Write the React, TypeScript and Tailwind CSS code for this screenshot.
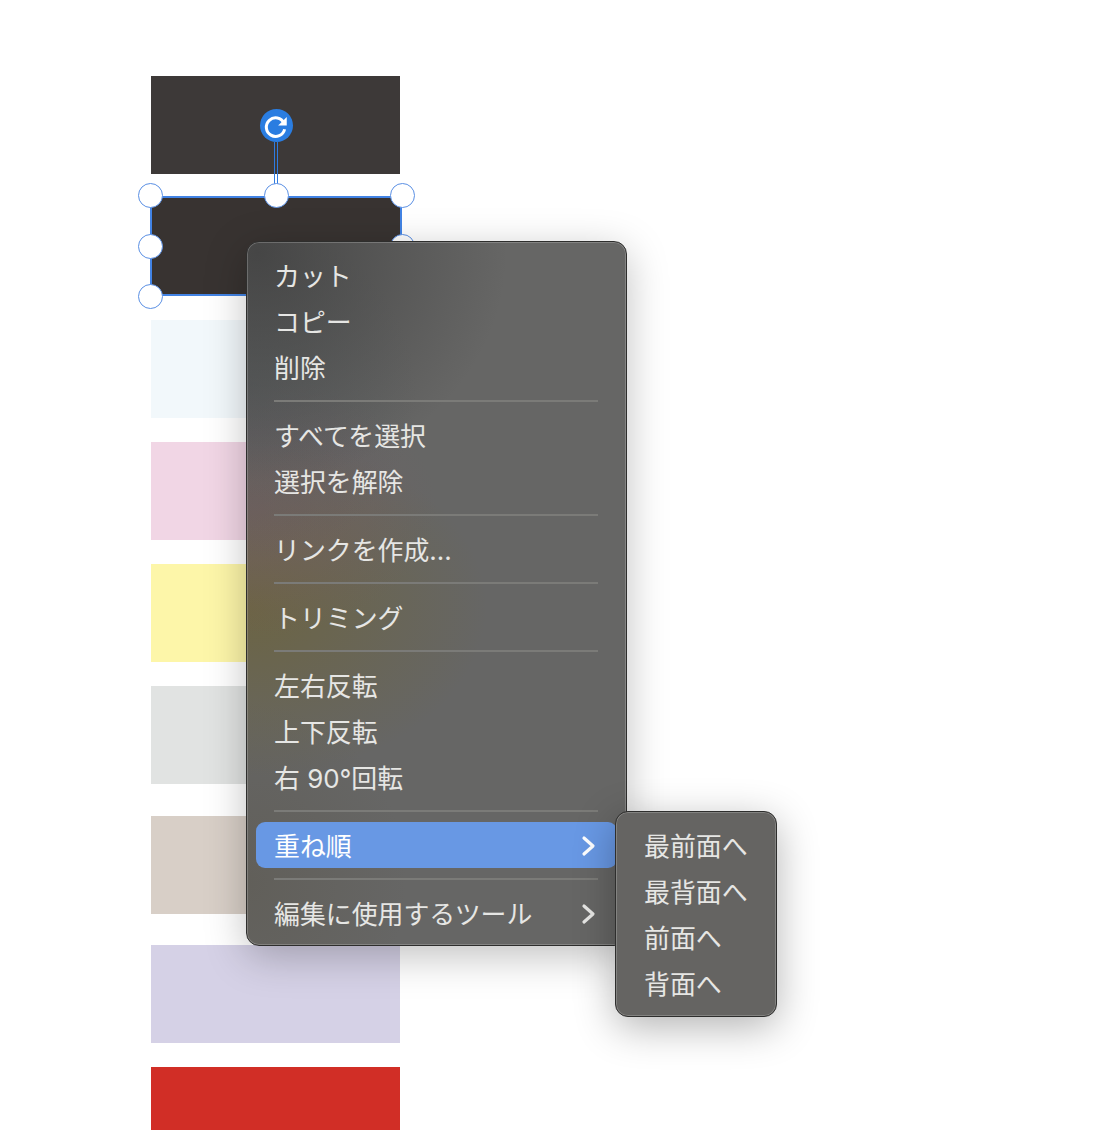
const swatches = [
  { cls: "h-[98px] mb-[22px] bg-[#3d3938]" },
  { cls: "h-[98px] mb-[26px] bg-[#383331]", selected: true },
  { cls: "h-[98px] mb-[24px] bg-[#f2f8fb]" },
  { cls: "h-[98px] mb-[24px] bg-[#f1d6e5]" },
  { cls: "h-[98px] mb-[24px] bg-[#fdf6a9]" },
  { cls: "h-[98px] mb-[32px] bg-[#e1e3e2]" },
  { cls: "h-[98px] mb-[31px] bg-[#d8cfc7]" },
  { cls: "h-[98px] mb-[24px] bg-[#d5d1e6]" },
  { cls: "h-[98px] bg-[#d12e26]" },
];

function Chevron() {
  return (
    <svg width="16" height="22" viewBox="0 0 16 22" fill="none" className="shrink-0 mt-[2px]">
      <path d="M3 3l9 8-9 8" stroke="currentColor" strokeWidth="3.2" strokeLinecap="round" strokeLinejoin="round" />
    </svg>
  );
}

function Handle({ cls }: { cls: string }) {
  return <span className={`absolute w-[25px] h-[25px] rounded-full bg-white border border-[#5b90e4] ${cls}`} />;
}

function SelectionFrame() {
  return (
    <>
      <div className="absolute -left-px -right-[2px] top-0 -bottom-[2px] border-2 border-[#4283e4]" />
      <div className="absolute left-[123px] top-[-54px] w-[4px] h-[42px] border-x border-[#2f7be0]" />
      <div className="absolute left-[108.5px] top-[-87px] w-[33px] h-[33px] rounded-full bg-[#2a7de1] flex items-center justify-center">
        <svg width="28" height="28" viewBox="0 0 26 26" fill="none">
          <path d="M20.4 10.4A8.6 8.6 0 1 0 21 16" stroke="white" strokeWidth="2.8" />
          <path d="M23 4.6v8h-8z" fill="white" />
        </svg>
      </div>
      <Handle cls="left-[-13.5px] top-[-13px]" />
      <Handle cls="left-[112.5px] top-[-13px]" />
      <Handle cls="left-[239px] top-[-13px]" />
      <Handle cls="left-[-13.5px] top-[38px]" />
      <Handle cls="left-[239px] top-[38px]" />
      <Handle cls="left-[-13.5px] top-[88px]" />
    </>
  );
}

function Row({ label, active, more }: { label: string; active?: boolean; more?: boolean }) {
  return (
    <div
      className={`h-[46px] pl-[18px] pr-[20px] flex items-center justify-between rounded-[9px] text-[25.9px] leading-none ${
        active ? "bg-[#6898e4] text-white" : "text-[#e6e6e4]"
      }`}
    >
      <span className="mt-[4px]">{label}</span>
      {more && <Chevron />}
    </div>
  );
}

function Sep() {
  return <div className="ml-[18px] mr-[19px] my-[10px] h-[2px] bg-[#7b7b78]" />;
}

function ContextMenu() {
  return (
    <div className="absolute left-[246px] top-[241px] w-[381px] h-[705px] pt-[10px] px-[9px] rounded-[13px] border border-[#2e2e2d] bg-[radial-gradient(ellipse_250px_230px_at_10px_10px,rgba(62,62,62,0.8),transparent),radial-gradient(ellipse_170px_170px_at_0px_150px,rgba(84,90,92,0.5),transparent),radial-gradient(ellipse_190px_130px_at_0px_265px,rgba(118,92,98,0.55),transparent),radial-gradient(ellipse_240px_170px_at_0px_365px,rgba(110,100,56,0.75),transparent),radial-gradient(ellipse_160px_180px_at_0px_640px,rgba(92,88,78,0.5),transparent),linear-gradient(#666665,#666665)] shadow-[inset_0_0_0_1px_rgba(255,255,255,0.2),0_10px_40px_rgba(0,0,0,0.25)]">
      <Row label="カット" />
      <Row label="コピー" />
      <Row label="削除" />
      <Sep />
      <Row label="すべてを選択" />
      <Row label="選択を解除" />
      <Sep />
      <Row label="リンクを作成..." />
      <Sep />
      <Row label="トリミング" />
      <Sep />
      <Row label="左右反転" />
      <Row label="上下反転" />
      <Row label="右 90°回転" />
      <Sep />
      <Row label="重ね順" active more />
      <Sep />
      <Row label="編集に使用するツール" more />
    </div>
  );
}

function SubMenu() {
  return (
    <div className="absolute left-[615px] top-[811px] w-[162px] h-[206px] pt-[10px] pl-[28px] rounded-[13px] border border-[#2e2e2d] bg-[#656462] shadow-[inset_0_0_0_1px_rgba(255,255,255,0.2),0_10px_40px_rgba(0,0,0,0.3)] text-[25.9px] leading-none text-[#e6e6e4]">
      {["最前面へ", "最背面へ", "前面へ", "背面へ"].map((t) => (
        <div key={t} className="h-[46px] flex items-center">
          <span className="mt-[4px]">{t}</span>
        </div>
      ))}
    </div>
  );
}

export default function App() {
  return (
    <div className="relative h-[1130px] overflow-hidden bg-white pt-[76px] pl-[151px] font-['Inter','Noto_Sans_CJK_JP',sans-serif]">
      <div className="w-[249px]">
        {swatches.map((s, i) => (
          <div key={i} className={`relative ${s.cls}`}>
            {s.selected && <SelectionFrame />}
          </div>
        ))}
      </div>
      <ContextMenu />
      <SubMenu />
    </div>
  );
}
